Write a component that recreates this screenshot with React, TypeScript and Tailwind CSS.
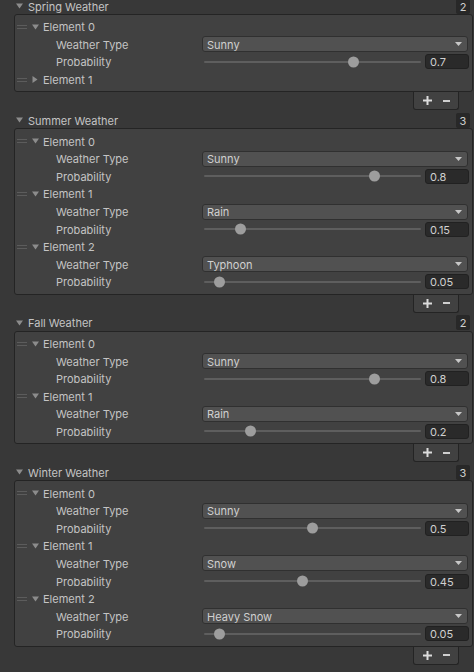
import React from 'react';

type Item = { type?: string; p?: number; label?: string; collapsed?: boolean };
type Section = { name: string; items: Item[] };

const SECTIONS: Section[] = [
  { name: 'Spring Weather', items: [{ type: 'Sunny', p: 0.7, label: '0.7' }, { collapsed: true }] },
  {
    name: 'Summer Weather',
    items: [
      { type: 'Sunny', p: 0.8, label: '0.8' },
      { type: 'Rain', p: 0.15, label: '0.15' },
      { type: 'Typhoon', p: 0.05, label: '0.05' },
    ],
  },
  {
    name: 'Fall Weather',
    items: [
      { type: 'Sunny', p: 0.8, label: '0.8' },
      { type: 'Rain', p: 0.2, label: '0.2' },
    ],
  },
  {
    name: 'Winter Weather',
    items: [
      { type: 'Sunny', p: 0.5, label: '0.5' },
      { type: 'Snow', p: 0.45, label: '0.45' },
      { type: 'Heavy Snow', p: 0.05, label: '0.05' },
    ],
  },
];

function Tri({ open }: { open: boolean }) {
  return open ? (
    <svg width="7" height="6" viewBox="0 0 7 6" className="shrink-0">
      <polygon points="0,0.5 7,0.5 3.5,5.5" fill="#8c8c8c" />
    </svg>
  ) : (
    <svg width="6" height="7" viewBox="0 0 6 7" className="shrink-0">
      <polygon points="0.5,0 5.5,3.5 0.5,7" fill="#8c8c8c" />
    </svg>
  );
}

function Handle() {
  return (
    <div className="w-[10px] flex flex-col gap-[2px] shrink-0">
      <div className="h-[1px] bg-[#5c5c5c]" />
      <div className="h-[1px] bg-[#5c5c5c]" />
    </div>
  );
}

function Row({ children }: { children: React.ReactNode }) {
  return <div className="h-[17.6px] flex items-center">{children}</div>;
}

function Dropdown({ value }: { value: string }) {
  return (
    <div className="flex-1 h-[16px] flex items-center bg-[#515151] border border-[#303030] rounded-[3px] pl-[4px] pr-[5px] text-[#d0d0d0]">
      <span className="relative top-[1px]">{value}</span>
      <svg width="7" height="4" viewBox="0 0 7 4" className="ml-auto">
        <polygon points="0,0 7,0 3.5,4" fill="#c8c8c8" />
      </svg>
    </div>
  );
}

function Slider({ p, label }: { p: number; label: string }) {
  return (
    <div className="flex-1 flex items-center h-full">
      <div className="relative flex-1 h-full mx-[2px]">
        <div className="absolute left-0 right-0 top-1/2 h-[2px] -translate-y-1/2 bg-[#5e5e5e] rounded-full" />
        <div
          className="absolute top-1/2 w-[11px] h-[11px] -translate-y-1/2 rounded-full bg-[#9d9d9d]"
          style={{ left: `calc(${p} * (100% - 11px))` }}
        />
      </div>
      <div className="w-[44px] h-[15px] ml-[2px] flex items-center bg-[#2a2a2a] border border-[#212121] rounded-[3px] pl-[4px] text-[#d0d0d0]">
        <span className="relative top-[1px]">{label}</span>
      </div>
    </div>
  );
}

function Block({ section }: { section: Section }) {
  return (
    <div>
      <div className="h-[16px] flex items-center pl-[16px] pr-[4px]">
        <Tri open />
        <span className="ml-[5px] relative top-[1px]">{section.name}</span>
        <div className="ml-auto w-[14px] h-[15px] flex items-center justify-center bg-[#282828] rounded-[2px] text-[#d0d0d0]">
          <span className="relative top-[1px]">{section.items.length}</span>
        </div>
      </div>
      <div className="ml-[14px] mr-[1px] border border-[#242424] bg-[#414141] rounded-[3px] py-[3px]">
        {section.items.map((it, i) => (
          <div key={i}>
            <Row>
              <div className="ml-[2px]">
                <Handle />
              </div>
              <div className="ml-[5px] w-[6px] flex justify-center">
                <Tri open={!it.collapsed} />
              </div>
              <span className="ml-[5px] relative top-[1px]">Element {i}</span>
            </Row>
            {!it.collapsed && (
              <>
                <Row>
                  <span className="pl-[41px] w-[187px] shrink-0 relative top-[1px]">Weather Type</span>
                  <div className="flex-1 flex pr-[4px]">
                    <Dropdown value={it.type!} />
                  </div>
                </Row>
                <Row>
                  <span className="pl-[41px] w-[187px] shrink-0 relative top-[1px]">Probability</span>
                  <div className="flex-1 flex h-full items-center pr-[3px]">
                    <Slider p={it.p!} label={it.label!} />
                  </div>
                </Row>
              </>
            )}
          </div>
        ))}
      </div>
      <div className="h-[20px] flex justify-end pr-[15px]">
        <div className="w-[46px] h-[18px] bg-[#414141] border border-t-0 border-[#242424] rounded-b-[3px] flex items-center justify-center gap-[11px]">
          <svg width="9" height="9" viewBox="0 0 9 9">
            <rect x="3.5" y="0" width="2" height="9" fill="#dcdcdc" />
            <rect x="0" y="3.5" width="9" height="2" fill="#dcdcdc" />
          </svg>
          <svg width="7" height="2" viewBox="0 0 7 2">
            <rect x="0" y="0" width="7" height="2" fill="#cfcfcf" />
          </svg>
        </div>
      </div>
    </div>
  );
}

export default function App() {
  return (
    <div className="w-[474px] h-[672px] overflow-hidden bg-[#383838] font-['Inter',sans-serif] text-[11px] leading-none text-[#c4c4c4]">
      <div className="mt-[-2px]">
        {SECTIONS.map(s => (
          <Block key={s.name} section={s} />
        ))}
      </div>
    </div>
  );
}
